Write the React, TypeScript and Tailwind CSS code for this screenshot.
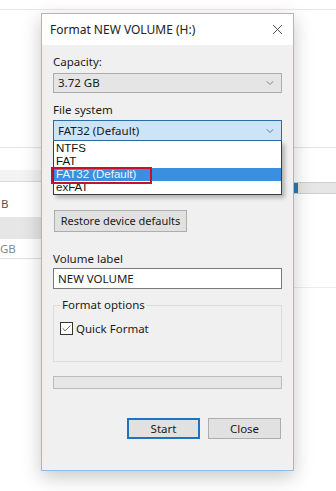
import { X, ChevronDown, Check } from "lucide-react";

export default function App() {
  return (
    <div className="relative w-[336px] h-[491px] bg-white overflow-hidden font-['Noto_Sans',sans-serif] text-[11.5px] text-[#1a1a1a]">
      {/* explorer window behind */}
      <div className="absolute left-0 top-[9px] w-full h-px bg-[#e8e8e8]" />
      <div className="absolute left-0 top-[147px] w-full h-px bg-[#e3e3e3]" />
      <div className="absolute left-0 top-[170px] w-[41px] h-[12px] bg-[#f3f3f3] border-b border-[#d9d9d9]" />
      <div className="absolute left-0 top-[194px] w-[41px] h-[20px] text-[#555] leading-[20px] pl-px">B</div>
      <div className="absolute left-0 top-[217px] w-[41px] h-[22px] bg-[#e6e6e6]" />
      <div className="absolute left-0 top-[239px] w-[41px] h-[20px] text-[#888] leading-[20px] border-b border-[#e0e0e0]">GB</div>
      <div className="absolute left-[293px] top-[182px] w-[43px] h-[12px] bg-[#e6e6e6] border-y border-[#cfcfcf] flex">
        <div className="w-[5px] h-full bg-[#2a7ab5]" />
      </div>
      <div className="absolute left-[293px] top-[287px] w-[43px] h-px bg-[#ececec]" />

      {/* dialog */}
      <div className="absolute left-[41px] top-[13px] w-[253px] h-[458px] border border-[#8fbde6] bg-[#f0f0f0] shadow-[0_6px_18px_rgba(0,0,0,0.22)] flex flex-col">
        <div className="h-[31px] bg-white flex items-center justify-between pl-[8px] pr-[7px]">
          <span className="text-[12px] text-[#222]">Format NEW VOLUME (H:)</span>
          <X size={17} strokeWidth={1.2} className="text-[#333]" />
        </div>

        <div className="flex flex-col px-[11px]">
          <div className="mt-[9px] h-[15px] leading-[15px]">Capacity:</div>
          <div className="mt-[4px] h-[20px] border border-[#adadad] bg-[#e5e5e5] flex items-center justify-between pl-[4px] pr-[5px]">
            <span>3.72 GB</span>
            <ChevronDown size={12} strokeWidth={1.5} className="text-[#666]" />
          </div>

          <div className="mt-[9px] h-[15px] leading-[15px]">File system</div>
          <div className="relative mt-[3px]">
            <div className="h-[21px] border border-[#2b6ca8] bg-[#cce4f7] flex items-center justify-between pl-[4px] pr-[5px]">
              <span>FAT32 (Default)</span>
              <ChevronDown size={12} strokeWidth={1.5} className="text-[#555]" />
            </div>
            <div className="absolute left-0 top-[21px] w-full h-[54px] bg-white border border-[#3c3c3c] border-t-0 shadow-[3px_3px_4px_rgba(0,0,0,0.25)] font-['Liberation_Sans',sans-serif] text-[11.5px] leading-[13px] pt-px z-10">
              <div className="h-[13px] pl-[2px] text-[#111]">NTFS</div>
              <div className="h-[13px] pl-[2px] text-[#111]">FAT</div>
              <div className="relative h-[13px] pl-[2px] bg-[#3b8fe0] text-[#eaf4ff]">
                FAT32 (Default)
                <div className="absolute left-[-3px] top-[-1px] w-[101px] h-[17px] border-2 border-[#c8102e]" />
              </div>
              <div className="h-[13px] pl-[2px] text-[#111]">exFAT</div>
            </div>
          </div>

          <div className="mt-[69px] ml-px w-[133px] h-[22px] border border-[#adadad] bg-[#e1e1e1] flex items-center justify-center text-[11px]">
            Restore device defaults
          </div>

          <div className="mt-[19px] h-[15px] leading-[15px]">Volume label</div>
          <div className="mt-[2px] h-[21px] border border-[#7a7a7a] bg-white flex items-center pl-[4px]">
            NEW VOLUME
          </div>

          <div className="relative mt-[16px] h-[57px] border border-[#dcdcdc]">
            <span className="absolute left-[7px] top-[-9px] bg-[#f0f0f0] px-px leading-[15px]">Format options</span>
            <div className="mt-[14px] ml-[6px] flex items-center gap-[3px]">
              <div className="w-[13px] h-[13px] border border-[#333] bg-white flex items-center justify-center">
                <Check size={11} strokeWidth={1.6} className="text-[#222]" />
              </div>
              <span>Quick Format</span>
            </div>
          </div>

          <div className="mt-[14px] h-[13px] border border-[#bcbcbc] bg-[#e6e6e6]" />

          <div className="mt-[29px] flex justify-end gap-[8px] pr-[1px]">
            <div className="w-[73px] h-[21px] border-2 border-[#1e73c0] bg-[#e1e1e1] flex items-center justify-center">Start</div>
            <div className="w-[73px] h-[21px] border border-[#adadad] bg-[#e1e1e1] flex items-center justify-center">Close</div>
          </div>
        </div>
      </div>
    </div>
  );
}
